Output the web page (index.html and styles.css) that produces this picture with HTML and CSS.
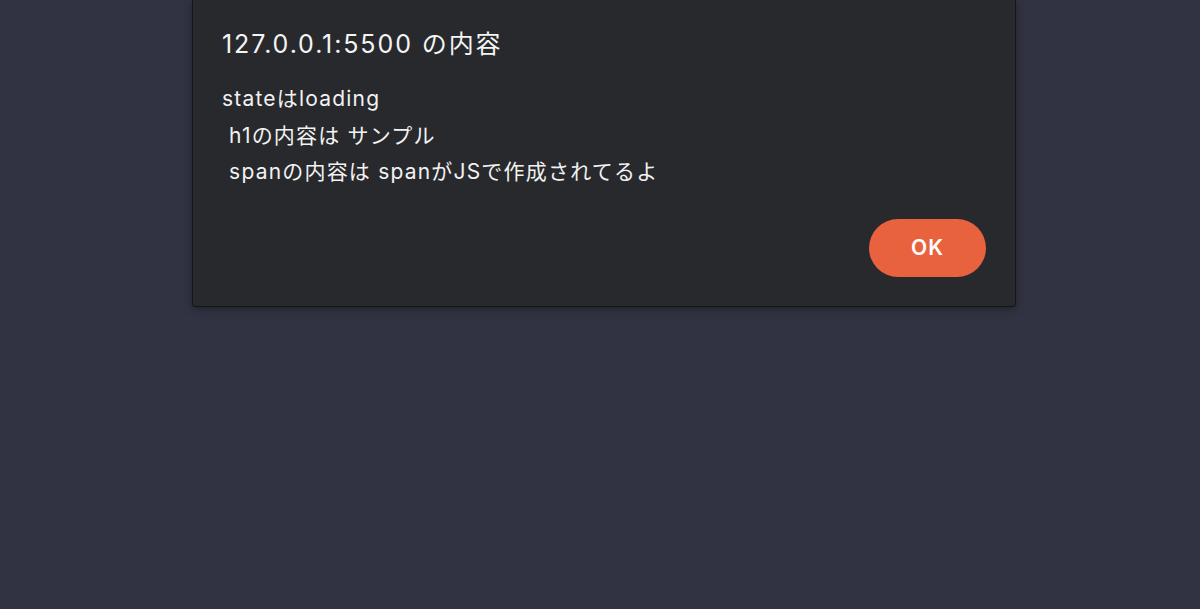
FILE: index.html
```html
<!DOCTYPE html>
<html lang="ja">
<head>
<meta charset="utf-8">
<title>alert</title>
<link rel="stylesheet" href="styles.css">
</head>
<body>
<div class="dialog">
  <div class="title">127.0.0.1:5500 の内容</div>
  <div class="message">stateはloading
 h1の内容は サンプル
 spanの内容は spanがJSで作成されてるよ</div>
  <div class="actions">
    <button class="ok">OK</button>
  </div>
</div>
</body>
</html>
```

FILE: styles.css
```css
html, body {
  margin: 0;
  padding: 0;
  height: 100%;
}
body {
  background: #313342;
  font-family: Inter, "Noto Sans CJK JP", sans-serif;
  color: #f2f2f2;
}
.dialog {
  box-sizing: border-box;
  width: 824px;
  margin-left: 192px;
  background: #28292d;
  border: 1px solid #161618;
  border-top: none;
  border-radius: 0 0 4px 4px;
  box-shadow: 0 2px 8px rgba(0,0,0,0.35);
  padding: 29px 29px 29px 29px;
  display: flex;
  flex-direction: column;
}
.title {
  font-size: 25px;
  line-height: 30px;
  letter-spacing: 1.9px;
  color: #f4f4f4;
}
.message {
  margin-top: 22px;
  font-size: 21px;
  line-height: 36.5px;
  letter-spacing: 1.2px;
  white-space: pre-wrap;
  color: #f2f2f2;
}
.actions {
  margin-top: 28px;
  display: flex;
  justify-content: flex-end;
}
.ok {
  width: 117px;
  height: 58px;
  border: none;
  border-radius: 29px;
  background: #e9623e;
  color: #ffffff;
  font-family: Inter, sans-serif;
  font-weight: 600;
  font-size: 21px;
  letter-spacing: 1px;
  padding: 0;
}
```
